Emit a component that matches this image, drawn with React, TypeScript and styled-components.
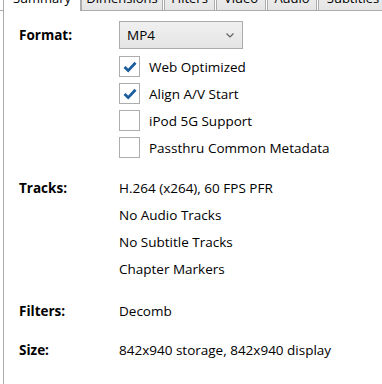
import React from 'react';
import styled, { createGlobalStyle } from 'styled-components';

const GlobalStyle = createGlobalStyle`
  html, body {
    margin: 0;
    padding: 0;
    background: #ffffff;
  }
  body {
    font-family: "Open Sans", "Noto Sans", "Liberation Sans", sans-serif;
    font-size: 13.5px;
    color: #000;
  }
`;

type TabInfo = { label: string; width: number };

const tabs: TabInfo[] = [
  { label: 'Summary', width: 78 },
  { label: 'Dimensions', width: 82 },
  { label: 'Filters', width: 51 },
  { label: 'Video', width: 50 },
  { label: 'Audio', width: 50 },
  { label: 'Subtitles', width: 70 },
];

const options = [
  { label: 'Web Optimized', checked: true },
  { label: 'Align A/V Start', checked: true },
  { label: 'iPod 5G Support', checked: false },
  { label: 'Passthru Common Metadata', checked: false },
];

const tracks = ['H.264 (x264), 60 FPS PFR', 'No Audio Tracks', 'No Subtitle Tracks', 'Chapter Markers'];

export default function App() {
  return (
    <>
      <GlobalStyle />
      <Window>
        <TabStrip>
          {tabs.map((t, i) => (
            <Tab key={t.label} $width={t.width} $active={i === 0}>
              {t.label}
            </Tab>
          ))}
        </TabStrip>
        <Panel>
          <Section $top={10}>
            <Label $lineHeight={28}>Format:</Label>
            <div>
              <Combo>
                <span>MP4</span>
                <svg width="8" height="5" viewBox="0 0 8 5">
                  <polyline points="0.5,0.5 4,4 7.5,0.5" fill="none" stroke="#606060" strokeWidth="1.2" />
                </svg>
              </Combo>
              <CheckList>
                {options.map((o) => (
                  <CheckRow key={o.label}>
                    <Box>
                      {o.checked && (
                        <svg width="14" height="12" viewBox="0 0 14 12">
                          <polyline points="1.5,6 5.2,9.6 12.5,1.8" fill="none" stroke="#1c5d9e" strokeWidth="2.8" />
                        </svg>
                      )}
                    </Box>
                    {o.label}
                  </CheckRow>
                ))}
              </CheckList>
            </div>
          </Section>
          <Section $top={14}>
            <Label>Tracks:</Label>
            <div>
              {tracks.map((t) => (
                <Line key={t}>{t}</Line>
              ))}
            </div>
          </Section>
          <Section $top={15}>
            <Label>Filters:</Label>
            <Line>Decomb</Line>
          </Section>
          <Section $top={12}>
            <Label>Size:</Label>
            <Line>842x940 storage, 842x940 display</Line>
          </Section>
        </Panel>
      </Window>
    </>
  );
}

const Window = styled.div`
  width: 382px;
  height: 384px;
  overflow: hidden;
  background: #fff;
  display: flex;
  flex-direction: column;
`;

const TabStrip = styled.div`
  display: flex;
  margin-top: -12px;
  padding-left: 3px;
  border-bottom: 1px solid #acacac;
  flex-shrink: 0;
`;

const Tab = styled.div<{ $width: number; $active?: boolean }>`
  box-sizing: border-box;
  width: ${(p) => p.$width}px;
  flex-shrink: 0;
  line-height: 18px;
  text-align: center;
  border: 1px solid #acacac;
  border-bottom: none;
  margin-right: ${(p) => (p.$active ? 0 : 1)}px;
  margin-bottom: ${(p) => (p.$active ? -1 : 0)}px;
  height: ${(p) => (p.$active ? 23 : 22)}px;
  background: ${(p) => (p.$active ? '#ffffff' : 'linear-gradient(#f0f0f0, #e5e5e5)')};
  color: #000;
  font-size: 13px;
`;

const Panel = styled.div`
  flex: 1;
  margin-left: 3px;
  border-left: 1px solid #acacac;
  padding-left: 15px;
`;

const Section = styled.div<{ $top: number }>`
  display: grid;
  grid-template-columns: 100px 1fr;
  margin-top: ${(p) => p.$top}px;
`;

const Label = styled.div<{ $lineHeight?: number }>`
  font-weight: 700;
  line-height: ${(p) => p.$lineHeight ?? 27}px;
`;

const Line = styled.div`
  line-height: 27px;
  white-space: nowrap;
`;

const Combo = styled.div`
  box-sizing: border-box;
  width: 124px;
  height: 28px;
  border: 1px solid #acacac;
  background: linear-gradient(#f0f0f0, #e5e5e5);
  display: flex;
  align-items: center;
  justify-content: space-between;
  padding: 0 8px 0 7px;
`;

const CheckList = styled.div`
  margin-top: 4px;
`;

const CheckRow = styled.div`
  display: flex;
  align-items: center;
  gap: 9px;
  height: 27px;
  white-space: nowrap;
`;

const Box = styled.div`
  box-sizing: border-box;
  width: 21px;
  height: 21px;
  border: 1px solid #adadad;
  background: #fff;
  display: flex;
  align-items: center;
  justify-content: center;
`;
